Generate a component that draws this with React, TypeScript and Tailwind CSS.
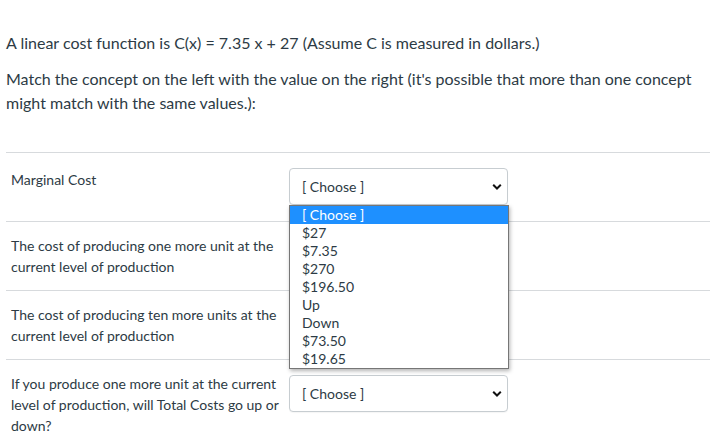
import React from "react";

const options = ["[ Choose ]", "$27", "$7.35", "$270", "$196.50", "Up", "Down", "$73.50", "$19.65"];

function Chevron() {
  return (
    <svg width="10" height="7" viewBox="0 0 10 7" className="absolute right-[5px] top-1/2 -translate-y-1/2">
      <path d="M1.2 1.3 L5 5 L8.8 1.3" fill="none" stroke="#111" strokeWidth="2" />
    </svg>
  );
}

function Select({ open = false }: { open?: boolean }) {
  return (
    <div className="relative w-[219px]">
      <div className="relative h-[37px] w-full rounded-[4px] border border-[#c7cdd1] bg-white pl-[12px] flex items-center text-[14px] text-[#2d3b45] shadow-[0_1px_1px_rgba(0,0,0,0.04)]">
        [ Choose ]
        <Chevron />
      </div>
      {open && (
        <div className="absolute left-0 top-full z-10 w-[220px] border border-[#767676] bg-white shadow-[1px_2px_4px_rgba(0,0,0,0.3)]">
          {options.map((o, i) => (
            <div
              key={o}
              className={
                "h-[18px] leading-[18px] pl-[12px] text-[14px] " +
                (i === 0 ? "bg-[#1e90ff] text-white" : "text-[#2d3b45]")
              }
            >
              {o}
            </div>
          ))}
        </div>
      )}
    </div>
  );
}

function Row({ label, open, last, first }: { label: string; open?: boolean; last?: boolean; first?: boolean }) {
  return (
    <div className={"flex border-t border-[#d7dadd] " + (last ? "min-h-[86px]" : "h-[69px]")}>
      <div
        className={
          "w-[283px] shrink-0 pl-[5px] pr-[4px] text-[14px] leading-[21px] text-[#2d3b45] " +
          (first ? "pt-[16px]" : "pt-[13px]")
        }
      >
        {label}
      </div>
      <div className="pt-[15px]">
        <Select open={open} />
      </div>
    </div>
  );
}

export default function App() {
  return (
    <div
      className="bg-white min-h-[445px] pl-[6px] pt-[31px] text-[#2d3b45]"
      style={{ fontFamily: "Lato, 'Open Sans', sans-serif" }}
    >
      <p className="text-[16px] leading-[24px]">
        A linear cost function is C(x) = 7.35 x + 27 (Assume C is measured in dollars.)
      </p>
      <p className="mt-[12px] text-[16px] leading-[24px]">
        Match the concept on the left with the value on the right (it's possible that more than one concept
        might match with the same values.):
      </p>
      <div className="mt-[37px]">
        <Row label="Marginal Cost" open first />
        <Row label="The cost of producing one more unit at the current level of production" />
        <Row label="The cost of producing ten more units at the current level of production" />
        <Row
          label="If you produce one more unit at the current level of production, will Total Costs go up or down?"
          last
        />
      </div>
    </div>
  );
}
